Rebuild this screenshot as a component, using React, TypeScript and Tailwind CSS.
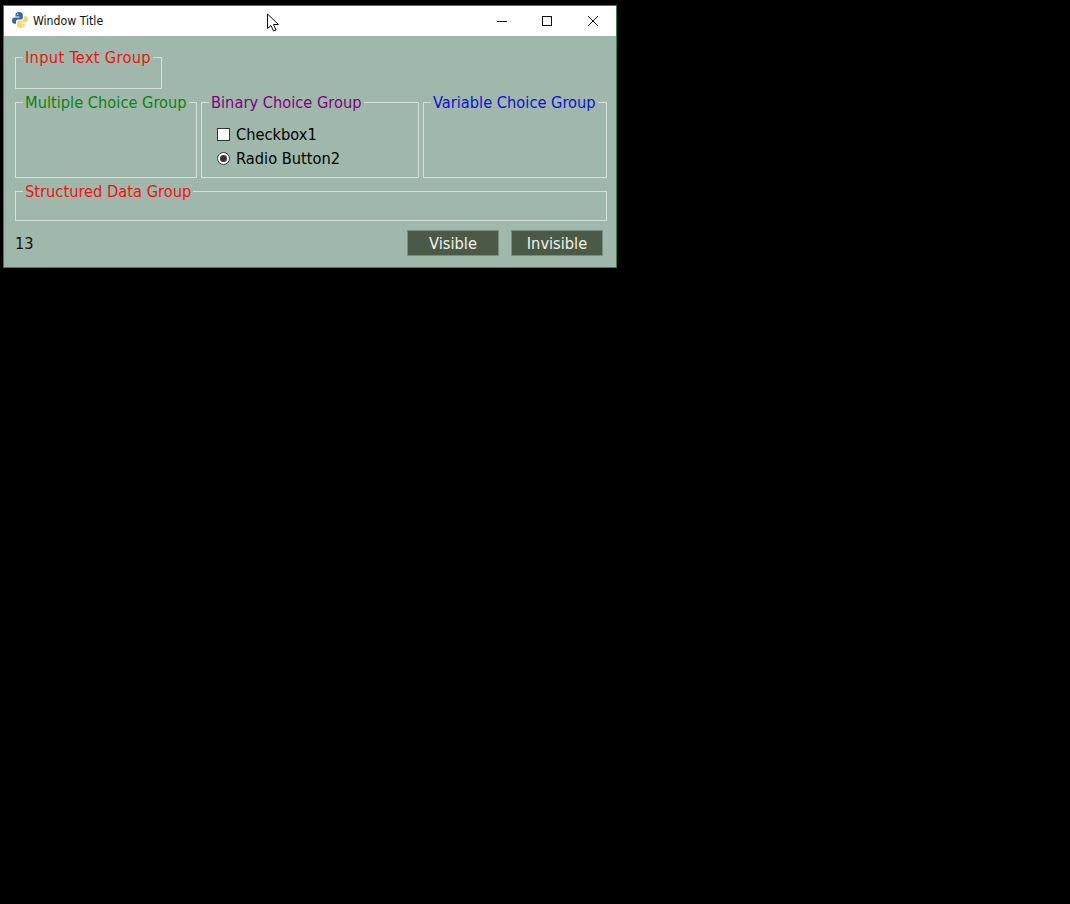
const font = "font-['DejaVu_Sans_Condensed','Noto_Sans',sans-serif]";

function Group({ title, color, className, children }: { title: string; color: string; className: string; children?: React.ReactNode }) {
  return (
    <fieldset className={`border border-[#d5e0da] m-0 min-w-0 ${className}`}>
      <legend className={`ml-[7px] px-[2px] text-[16.300px] h-[19px] leading-[20px] whitespace-nowrap ${color}`}>{title}</legend>
      {children}
    </fieldset>
  );
}

function PythonLogo() {
  return (
    <svg width="16" height="16" viewBox="0 0 16 16" className="shrink-0">
      <path d="M7 0C4.300 0 3.500 1 3.500 2.500V4.500H7.500V5.500H2.500C1 5.500 0 6.800 0 8.500 0 10.500 1 11.800 2.500 11.800H4V9.500C4 8.300 5 7.500 6 7.500H9C10 7.500 10.800 6.700 10.800 5.700V2.500C10.800 1 9.500 0 7 0Z" fill="#2f6aa5" />
      <path d="M9 16C11.700 16 12.500 15 12.500 13.500V11.500H8.500V10.500H13.500C15 10.500 16 9.200 16 7.500 16 5.500 15 4.200 13.500 4.200H12V6.500C12 7.700 11 8.500 10 8.500H7C6 8.500 5.200 9.300 5.200 10.300V13.500C5.200 15 6.500 16 9 16Z" fill="#f3d768" />
      <circle cx="5.500" cy="2.200" r=".8" fill="#dfe8f2" />
      <circle cx="10.500" cy="13.800" r=".8" fill="#fff8d8" />
    </svg>
  );
}

export default function App() {
  return (
    <div className={`min-h-[904px] bg-black pl-[3px] pt-[5px] ${font}`}>
      <div className="w-[614px] h-[263px] border border-[#3f7f45] flex flex-col">
        <div className="h-[30px] bg-white flex items-center shrink-0">
          <div className="ml-[8px] mr-[5px] flex -translate-y-[1px]"><PythonLogo /></div>
          <span className="text-[12.200px] text-[#111] flex-1">Window Title</span>
          <svg width="10" height="10" viewBox="0 0 10 10" className="mr-[35px]"><path d="M0 5.500H10" stroke="#111" strokeWidth="1" /></svg>
          <svg width="10" height="10" viewBox="0 0 10 10" className="mr-[36px]"><rect x=".5" y=".5" width="9" height="9" fill="none" stroke="#111" /></svg>
          <svg width="10" height="10" viewBox="0 0 10 10" className="mr-[18px]"><path d="M0 0 10 10M10 0 0 10" stroke="#111" strokeWidth="1" /></svg>
        </div>
        <div className="flex-1 bg-[#9fb8ab] pl-[11px] pr-[9px] pt-[12px] flex flex-col gap-[4px]">
          <Group title="Input Text Group" color="text-[#ee1111] tracking-[0.3px]" className="w-[147px] h-[41px]" />
          <div className="flex gap-[4px]">
            <Group title="Multiple Choice Group" color="text-[#108010]" className="w-[182px] h-[85px]" />
            <Group title="Binary Choice Group" color="text-[#800080]" className="w-[218px] h-[85px]">
              <div className="pl-[15px] pt-[11px] text-[16.300px] leading-[24px] text-black">
                <div className="flex items-center gap-[6px]">
                  <span className="w-[13px] h-[13px] border border-[#333] bg-white -translate-y-[1px]" />
                  <span>Checkbox1</span>
                </div>
                <div className="flex items-center gap-[6px]">
                  <span className="w-[13px] h-[13px] rounded-full border border-[#333] bg-white flex items-center justify-center -translate-y-[1px]">
                    <span className="w-[7px] h-[7px] rounded-full bg-[#333]" />
                  </span>
                  <span>Radio Button2</span>
                </div>
              </div>
            </Group>
            <Group title="Variable Choice Group" color="text-[#1010d0]" className="w-[184px] h-[85px]" />
          </div>
          <Group title="Structured Data Group" color="text-[#ee1111]" className="w-[592px] h-[39px]" />
          <div className="flex items-center w-[588px] mt-[5px] h-[26px]">
            <span className="text-[16.300px] pt-[3px] text-[#111] flex-1">13</span>
            <button className="w-[92px] h-[26px] pt-[2px] bg-[#4a5a46] border border-[#7b8c80] text-[#f2f2ea] text-[16.300px] mr-[12px] leading-none">Visible</button>
            <button className="w-[92px] h-[26px] pt-[2px] bg-[#4a5a46] border border-[#7b8c80] text-[#f2f2ea] text-[16.300px] leading-none">Invisible</button>
          </div>
        </div>
      </div>
      <svg width="14" height="20" viewBox="0 0 14 20" className="absolute left-[266px] top-[13px]">
        <path d="M1.500 1V15.500L5 12.500 7.500 18 10 17 7.500 11.500H12.500Z" fill="#fff" stroke="#111" strokeWidth="1" />
      </svg>
    </div>
  );
}
